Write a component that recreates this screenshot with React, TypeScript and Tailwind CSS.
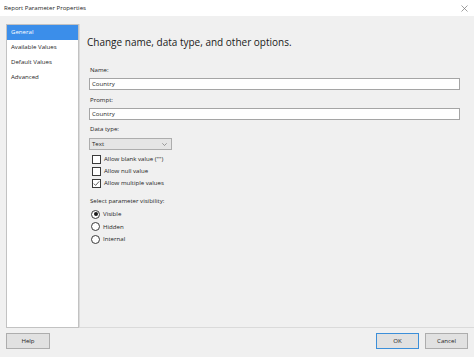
import React from "react";

const font = { fontFamily: '"Open Sans", "Noto Sans", sans-serif' };

function Checkbox({ checked, label }: { checked?: boolean; label: string }) {
  return (
    <div className="flex items-center h-[12px] pl-[4px]">
      <div className="w-[9px] h-[9px] border border-[#3a3a3a] bg-white flex items-center justify-center">
        {checked && (
          <svg width="7" height="7" viewBox="0 0 7 7">
            <path d="M0.8 3.6 L2.6 5.4 L6.2 1.4" fill="none" stroke="#333" strokeWidth="0.8" />
          </svg>
        )}
      </div>
      <span className="ml-[3px] text-[6.1px] text-[#1e1e1e] leading-none">{label}</span>
    </div>
  );
}

function Radio({ checked, label }: { checked?: boolean; label: string }) {
  return (
    <div className="flex items-center h-[12.5px] pl-[3px]">
      <div className="w-[9px] h-[9px] rounded-full border border-[#3a3a3a] bg-white flex items-center justify-center">
        {checked && <div className="w-[4px] h-[4px] rounded-full bg-[#1a1a1a]" />}
      </div>
      <span className="ml-[3px] text-[6.1px] text-[#1e1e1e] leading-none">{label}</span>
    </div>
  );
}

export default function App() {
  const items = ["General", "Available Values", "Default Values", "Advanced"];
  return (
    <div className="w-[474px] h-[357px] bg-[#f0f0f0] flex flex-col overflow-hidden" style={font}>
      <div className="h-[16px] bg-white flex items-center justify-between pl-[4px] pr-[6px] shrink-0">
        <span className="text-[6.1px] text-[#1e1e1e] leading-none">Report Parameter Properties</span>
        <svg width="7" height="7" viewBox="0 0 7 7">
          <path d="M0.5 0.5 L6.5 6.5 M6.5 0.5 L0.5 6.5" stroke="#777" strokeWidth="0.7" />
        </svg>
      </div>
      <div className="flex pt-[8px] pl-[6px] h-[312px] shrink-0">
        <div className="w-[73px] h-[304px] bg-white border border-[#c2c2c2] shrink-0">
          {items.map((it, i) => (
            <div
              key={it}
              className={
                i === 0
                  ? "h-[15px] flex items-center pl-[4px] bg-[#3b8eea] text-white text-[6.1px] leading-none"
                  : "h-[15px] flex items-center pl-[4px] text-[#1e1e1e] text-[6.1px] leading-none"
              }
            >
              {it}
            </div>
          ))}
        </div>
        <div className="flex-1 h-[304px] border-l border-b border-[#dadada] flex flex-col pl-[7px]">
          <div className="mt-[12px] h-[12px] flex items-center text-[10px] text-[#1a1a1a] leading-none">
            Change name, data type, and other options.
          </div>
          <div className="mt-[17px] h-[10px] flex items-center pl-[3px] text-[6.1px] text-[#1e1e1e] leading-none">Name:</div>
          <div className="mt-[3px] ml-[2px] w-[371px] h-[12px] bg-white border border-[#a5a5a5] flex items-center pl-[2px] text-[6.1px] text-[#1e1e1e] leading-none">
            Country
          </div>
          <div className="mt-[5px] h-[10px] flex items-center pl-[3px] text-[6.1px] text-[#1e1e1e] leading-none">Prompt:</div>
          <div className="mt-[3px] ml-[2px] w-[371px] h-[12px] bg-white border border-[#a5a5a5] flex items-center pl-[2px] text-[6.1px] text-[#1e1e1e] leading-none">
            Country
          </div>
          <div className="mt-[4px] h-[10px] flex items-center pl-[3px] text-[6.1px] text-[#1e1e1e] leading-none">Data type:</div>
          <div className="mt-[4px] ml-[2px] w-[83px] h-[12px] bg-[#e5e5e5] border border-[#adadad] flex items-center justify-between pl-[2px] pr-[4px] text-[6.1px] text-[#1e1e1e] leading-none">
            <span>Text</span>
            <svg width="5" height="3" viewBox="0 0 5 3">
              <path d="M0.3 0.3 L2.5 2.5 L4.7 0.3" fill="none" stroke="#666" strokeWidth="0.6" />
            </svg>
          </div>
          <div className="mt-[3px] ml-[1px]">
            <Checkbox label={'Allow blank value ("")'} />
            <Checkbox label="Allow null value" />
            <Checkbox checked label="Allow multiple values" />
          </div>
          <div className="mt-[7px] h-[10px] flex items-center pl-[3px] text-[6.1px] text-[#1e1e1e] leading-none">
            Select parameter visibility:
          </div>
          <div className="mt-[2px] ml-[1px]">
            <Radio checked label="Visible" />
            <Radio label="Hidden" />
            <Radio label="Internal" />
          </div>
        </div>
      </div>
      <div className="flex justify-between items-start pt-[5px] pl-[6px] pr-[6px]">
        <button className="w-[44px] h-[16px] bg-[#e1e1e1] border border-[#adadad] text-[6.1px] text-[#1e1e1e] leading-none flex items-center justify-center">
          Help
        </button>
        <div className="flex gap-[6px]">
          <button className="w-[43px] h-[16px] bg-[#e1e1e1] border border-[#3c8fd9] text-[6.1px] text-[#1e1e1e] leading-none flex items-center justify-center">
            OK
          </button>
          <button className="w-[43px] h-[16px] bg-[#e1e1e1] border border-[#adadad] text-[6.1px] text-[#1e1e1e] leading-none flex items-center justify-center">
            Cancel
          </button>
        </div>
      </div>
    </div>
  );
}
